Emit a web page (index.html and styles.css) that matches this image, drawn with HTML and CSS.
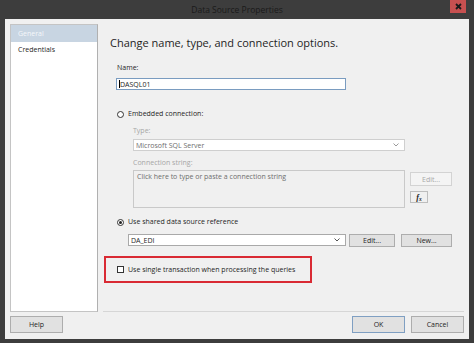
FILE: index.html
```html
<!DOCTYPE html>
<html lang="en">
<head>
    <meta charset="UTF-8">
    <title>Data Source Properties</title>
    <link rel="stylesheet" href="styles.css">
</head>
<body>
    <div class="window">
        <div class="titlebar">
            <span class="title">Data Source Properties</span>
            <span class="close">
                <svg width="7" height="7" viewBox="0 0 7 7"><path d="M1 1 L6 6 M6 1 L1 6" stroke="#1a1a1a" stroke-width="1.8"/></svg>
            </span>
        </div>

        <div class="client">
            <div class="main">
                <ul class="nav">
                    <li class="active">General</li>
                    <li>Credentials</li>
                </ul>

                <div class="page">
                    <h1>Change name, type, and connection options.</h1>

                    <div class="label name-label">Name:</div>
                    <div class="textbox name-box"><span class="caret"></span>DASQL01</div>

                    <div class="radio-row embedded-row"><span class="radio"></span>Embedded connection:</div>

                    <div class="indent">
                        <div class="label muted type-label">Type:</div>
                        <div class="textbox select type-select">
                            <span>Microsoft SQL Server</span>
                            <svg class="chevron" width="6" height="4" viewBox="0 0 6 4"><path d="M0.5 0.5 L3 3 L5.5 0.5" fill="none" stroke="#9a9a9a" stroke-width="1"/></svg>
                        </div>
                        <div class="label muted conn-label">Connection string:</div>
                        <div class="conn-row">
                            <div class="textarea">Click here to type or paste a connection string</div>
                            <div class="side-buttons">
                                <div class="btn disabled edit-small">Edit...</div>
                                <div class="btn fx"><span class="fx-f">f</span><span class="fx-x">x</span></div>
                            </div>
                        </div>
                    </div>

                    <div class="radio-row shared-row-label"><span class="radio checked"></span>Use shared data source reference</div>

                    <div class="shared-row">
                        <div class="textbox select combo">
                            <span>DA_EDI</span>
                            <svg class="chevron" width="6" height="4" viewBox="0 0 6 4"><path d="M0.5 0.5 L3 3 L5.5 0.5" fill="none" stroke="#555" stroke-width="1"/></svg>
                        </div>
                        <div class="btn edit-btn">Edit...</div>
                        <div class="btn new-btn">New...</div>
                    </div>

                    <div class="highlight">
                        <span class="checkbox"></span>Use single transaction when processing the queries
                    </div>
                </div>
            </div>

            <div class="footer">
                <div class="btn footer-btn">Help</div>
                <div class="footer-right">
                    <div class="btn footer-btn default">OK</div>
                    <div class="btn footer-btn">Cancel</div>
                </div>
            </div>
        </div>
    </div>
</body>
</html>
```

FILE: styles.css
```css
/* Window frame */
body {
    margin: 0;
    background-color: #3d3d3d;
    font-family: 'Open Sans', 'Noto Sans', sans-serif;
    font-size: 7px;
    color: #1e1e1e;
}

.window {
    width: 474px;
    height: 343px;
    display: flex;
    flex-direction: column;
}

/* Title bar */
.titlebar {
    height: 19px;
    position: relative;
    display: flex;
    justify-content: center;
    align-items: center;
}

.title {
    font-size: 8.5px;
    color: #1a1a1a;
    margin-top: -1px;
}

.close {
    position: absolute;
    top: 0;
    right: 8px;
    width: 16px;
    height: 13px;
    background-color: #c75050;
    display: flex;
    align-items: center;
    justify-content: center;
}

/* Client area */
.client {
    margin: 0 5px;
    height: 320px;
    box-sizing: border-box;
    padding: 5px 5px 6px 5px;
    background-color: #f0f0f0;
    display: flex;
    flex-direction: column;
}

.main {
    height: 288px;
    display: flex;
}

/* Left navigation */
.nav {
    list-style: none;
    margin: 0;
    padding: 0;
    width: 88px;
    box-sizing: border-box;
    background-color: #ffffff;
    border: 1px solid #c4c4c4;
    border-right-color: #b0b0b0;
}

.nav li {
    height: 16px;
    line-height: 16px;
    padding-left: 7px;
}

.nav li.active {
    height: 17px;
    line-height: 17px;
    background-color: #c8d5e2;
    color: #f5f7fa;
}

/* Page content */
.page {
    flex: 1;
    margin-left: 5px;
    border-bottom: 1px solid #d6d6d6;
    box-sizing: border-box;
}

h1 {
    margin: 12px 0 0 7px;
    font-size: 11px;
    font-weight: 400;
    line-height: 14px;
    color: #1e1e1e;
}

.label {
    height: 10px;
    line-height: 10px;
}

.muted {
    color: #a6a6a6;
}

.name-label {
    margin: 13px 0 0 14px;
}

.textbox {
    height: 12px;
    line-height: 11px;
    box-sizing: border-box;
    background-color: #ffffff;
    border: 1px solid #a9a9a9;
    padding-left: 2px;
    display: flex;
    align-items: center;
}

.name-box {
    margin: 5px 0 0 13px;
    width: 230px;
    border-color: #7a9cc0;
}

.caret {
    width: 1px;
    height: 8px;
    background-color: #000;
}

.radio-row {
    height: 10px;
    line-height: 10px;
    display: flex;
    align-items: center;
    margin-left: 14px;
}

.radio {
    width: 7px;
    height: 7px;
    box-sizing: border-box;
    border: 1px solid #333;
    border-radius: 50%;
    margin-right: 4px;
    background-color: #fff;
    position: relative;
}

.radio.checked::after {
    content: "";
    position: absolute;
    left: 1px;
    top: 1px;
    width: 3px;
    height: 3px;
    border-radius: 50%;
    background-color: #222;
}

.embedded-row {
    margin-top: 19px;
}

.indent {
    margin-left: 30px;
}

.type-label {
    margin-top: 7px;
}

.select {
    justify-content: space-between;
    padding-right: 5px;
}

.type-select {
    margin-top: 3px;
    width: 272px;
    border-color: #cfcfcf;
    color: #6e6e6e;
}

.conn-label {
    margin-top: 7px;
}

.conn-row {
    margin-top: 2px;
    display: flex;
}

.textarea {
    width: 272px;
    height: 38px;
    box-sizing: border-box;
    border: 1px solid #c9c9c9;
    background-color: #f0f0f0;
    color: #6e6e6e;
    padding: 1px 0 0 3px;
    line-height: 10px;
}

.side-buttons {
    margin-left: 5px;
    display: flex;
    flex-direction: column;
    align-items: flex-start;
}

/* Buttons */
.btn {
    box-sizing: border-box;
    border: 1px solid #adadad;
    background-color: #e1e1e1;
    display: flex;
    align-items: center;
    justify-content: center;
}

.btn.disabled {
    background-color: #f4f4f4;
    border-color: #d3d3d3;
    color: #a8a8a8;
}

.edit-small {
    margin-top: 2px;
    width: 42px;
    height: 14px;
}

.fx {
    margin-top: 5px;
    width: 18px;
    height: 12px;
    background-color: #f0f0f0;
    border-color: #bdbdbd;
    font-family: 'Liberation Serif', serif;
    font-style: italic;
    font-weight: bold;
    color: #222;
}

.fx-f {
    font-size: 8px;
}

.fx-x {
    font-size: 5.5px;
    margin-top: 3px;
}

.shared-row-label {
    margin-top: 9px;
}

.shared-row {
    margin: 7px 0 0 25px;
    display: flex;
}

.combo {
    width: 218px;
}

.edit-btn {
    margin-left: 3px;
    width: 46px;
    height: 13px;
}

.new-btn {
    margin-left: 6px;
    width: 51px;
    height: 13px;
}

/* Highlighted option */
.highlight {
    margin: 9px 0 0 1px;
    width: 208px;
    height: 27px;
    box-sizing: border-box;
    border: 2px solid #d92a33;
    display: flex;
    align-items: center;
    padding-left: 11px;
}

.checkbox {
    width: 7px;
    height: 7px;
    box-sizing: border-box;
    border: 1px solid #333;
    background-color: #fff;
    margin-right: 4px;
}

/* Footer */
.footer {
    margin-top: 4px;
    display: flex;
    justify-content: space-between;
}

.footer-right {
    display: flex;
    gap: 6px;
}

.footer-btn {
    width: 53px;
    height: 17px;
}

.footer-btn.default {
    border-color: #7f9fc2;
}
```
